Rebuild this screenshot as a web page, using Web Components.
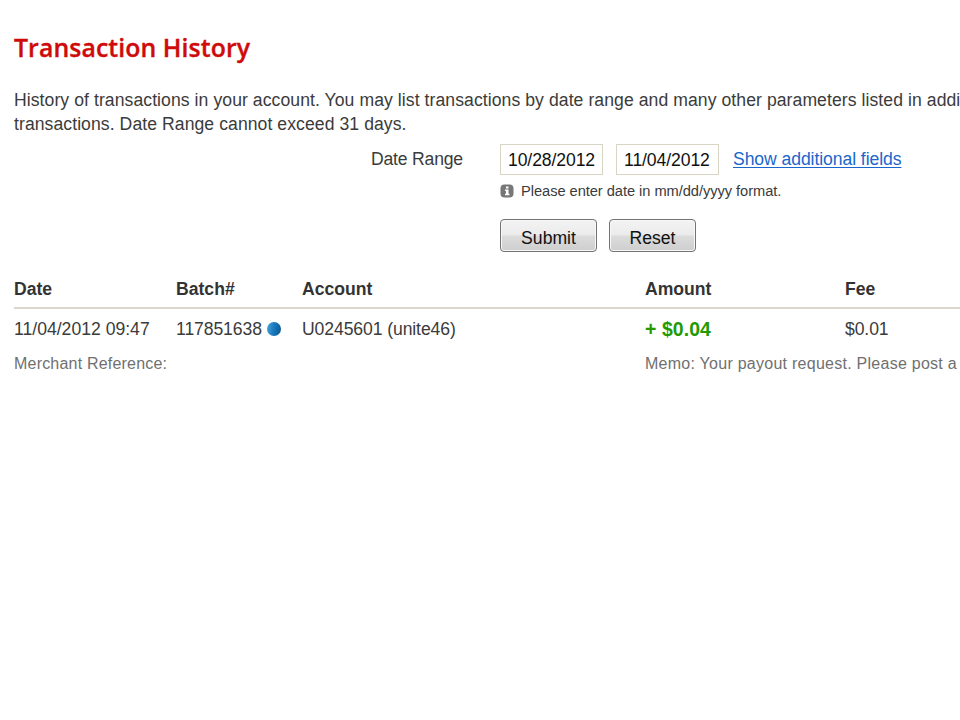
<!DOCTYPE html>
<html lang="en">
<head>
<meta charset="utf-8">
<title>Transaction History</title>
<style>
    body {
        margin: 0;
        width: 960px;
        height: 720px;
        overflow: hidden;
        background: #fff;
        color: #3b3b3b;
        font: 17.6px/24px "Liberation Sans", Arial, sans-serif;
    }
</style>
</head>
<body>
<history-page>
    <page-title slot="title">Transaction History</page-title>
    <page-intro slot="intro">
        <text-line>History of transactions in your account. You may list transactions by date range and many other parameters listed in addi</text-line>
        <text-line>transactions. Date Range cannot exceed 31 days.</text-line>
    </page-intro>
    <date-range-form slot="form" from="10/28/2012" to="11/04/2012"></date-range-form>
    <transaction-table slot="table">
        <transaction-row date="11/04/2012 09:47" batch="117851638" account="U0245601 (unite46)" amount="+ $0.04" fee="$0.01" reference="Merchant Reference:" memo="Memo: Your payout request. Please post a"></transaction-row>
    </transaction-table>
</history-page>

<script>
class BaseElement extends HTMLElement {
    constructor() {
        super();
        const template = document.createElement('template');
        template.innerHTML = this.constructor.markup;
        this.attachShadow({ mode: 'open' });
        this.shadowRoot.appendChild(template.content.cloneNode(true));
    }

    // copy each attribute into the [data-field] element of the same name
    connectedCallback() {
        this.shadowRoot.querySelectorAll('[data-field]').forEach(el => {
            el.textContent = this.getAttribute(el.dataset.field) || '';
        });
    }
}

class HistoryPage extends BaseElement {
    static markup = `
        <style>
            :host { display: flex; flex-direction: column; padding: 32px 0 0 14px; }
        </style>
        <slot name="title"></slot>
        <slot name="intro"></slot>
        <slot name="form"></slot>
        <slot name="table"></slot>
    `;
}

class PageTitle extends BaseElement {
    static markup = `
        <style>
            :host { display: block; height: 56px; }
            h1 {
                margin: 0;
                color: #cf0a0a;
                font: 600 24.8px/30px "Trebuchet MS", "Open Sans", sans-serif;
                letter-spacing: 0.1px;
                -webkit-text-stroke: 0.35px #cf0a0a;
                white-space: nowrap;
            }
        </style>
        <h1><slot></slot></h1>
    `;
}

class PageIntro extends BaseElement {
    static markup = `
        <style>
            :host { display: block; }
        </style>
        <slot></slot>
    `;
}

class TextLine extends BaseElement {
    static markup = `
        <style>
            :host { display: block; letter-spacing: 0.07px; white-space: nowrap; }
        </style>
        <slot></slot>
    `;
}

class DateInput extends BaseElement {
    static markup = `
        <style>
            :host {
                display: flex;
                align-items: center;
                box-sizing: border-box;
                width: 103px;
                height: 31px;
                padding: 1px 0 0 7px;
                border: 1px solid #d9d5c4;
                color: #111;
                letter-spacing: -0.1px;
                white-space: nowrap;
            }
        </style>
        <slot></slot>
    `;
}

class InfoIcon extends BaseElement {
    static markup = `
        <style>
            :host { display: block; width: 14px; height: 14px; margin-top: -3px; }
            svg { display: block; }
        </style>
        <svg width="14" height="14" viewBox="0 0 14 14">
            <rect x="0.5" y="0.5" width="13" height="13" rx="4" fill="#777"/>
            <path d="M6 2.5h2.5v2H6zM5 5.5h3.5v4.3h1v1.5H5V9.8h1V7H5z" fill="#fff"/>
        </svg>
    `;
}

class FormButton extends BaseElement {
    static markup = `
        <style>
            :host { display: block; }
            button {
                display: block;
                width: 100%;
                height: 33px;
                padding: 4px 0 0;
                border: 1.5px solid #737373;
                border-radius: 4px;
                background: linear-gradient(#f3f3f3, #ebebeb 48%, #dcdcdc 52%, #cecece);
                box-shadow: inset 0 0 0 1px #f8f8f8;
                color: #111;
                font: 17.6px/24px "Liberation Sans", Arial, sans-serif;
            }
        </style>
        <button type="button"><slot></slot></button>
    `;
}

class DateRangeForm extends BaseElement {
    static markup = `
        <style>
            :host { display: flex; padding-top: 8px; }
            .label { width: 92px; margin: 3px 0 0 357px; letter-spacing: -0.2px; white-space: nowrap; }
            .fields { display: flex; flex-direction: column; margin-left: 37px; }
            .row { display: flex; }
            a {
                margin: 3px 0 0 14px;
                color: #1a66cc;
                letter-spacing: -0.08px;
                text-decoration: underline 1px;
                text-underline-offset: 2px;
                white-space: nowrap;
            }
            .hint {
                margin-top: 6px;
                height: 20px;
                gap: 7px;
                align-items: center;
                font-size: 14.67px;
                letter-spacing: -0.05px;
                line-height: 20px;
                white-space: nowrap;
            }
            info-icon { margin-top: -1px; }
            .buttons { margin-top: 18px; gap: 12px; }
            .submit { width: 97px; }
            .reset { width: 87px; }
            date-input + date-input { margin-left: 13px; }
        </style>
        <div class="label">Date Range</div>
        <div class="fields">
            <div class="row">
                <date-input><span data-field="from"></span></date-input>
                <date-input><span data-field="to"></span></date-input>
                <a>Show additional fields</a>
            </div>
            <div class="row hint"><info-icon></info-icon><span>Please enter date in mm/dd/yyyy format.</span></div>
            <div class="row buttons">
                <form-button class="submit">Submit</form-button>
                <form-button class="reset">Reset</form-button>
            </div>
        </div>
    `;
}

const columns = '162px 126px 343px 200px 1fr';

class TransactionTable extends BaseElement {
    static markup = `
        <style>
            :host { display: block; margin-top: 25px; }
            .head {
                display: grid;
                grid-template-columns: ${columns};
                height: 30px;
                border-bottom: 2px solid #d9d7cb;
                font-weight: bold;
                color: #333;
            }
        </style>
        <div class="head">
            <span>Date</span><span>Batch#</span><span>Account</span><span>Amount</span><span>Fee</span>
        </div>
        <slot></slot>
    `;
}

class StatusDot extends BaseElement {
    static markup = `
        <style>
            :host {
                display: block;
                width: 14px;
                height: 14px;
                border-radius: 50%;
                background: linear-gradient(100deg, #49a3dc, #1878bd 50%, #0c5488);
            }
        </style>
    `;
}

class TransactionRow extends BaseElement {
    static markup = `
        <style>
            :host { display: block; letter-spacing: -0.1px; white-space: nowrap; }
            .main, .details { display: grid; grid-template-columns: ${columns}; }
            .main { padding-top: 8px; }
            .date { letter-spacing: 0; }
            .batch { display: flex; align-items: center; gap: 5px; }
            .amount { color: #229a00; font-weight: bold; font-size: 19.4px; letter-spacing: 0.1px; }
            .details { padding-top: 11px; color: #707070; font-size: 16px; letter-spacing: 0.2px; }
            .reference { grid-column: 1 / 4; }
            .memo { letter-spacing: 0.26px; }
        </style>
        <div class="main">
            <span class="date" data-field="date"></span>
            <span class="batch"><span data-field="batch"></span><status-dot></status-dot></span>
            <span data-field="account"></span>
            <span class="amount" data-field="amount"></span>
            <span data-field="fee"></span>
        </div>
        <div class="details">
            <span class="reference" data-field="reference"></span>
            <span class="memo" data-field="memo"></span>
        </div>
    `;
}

customElements.define('history-page', HistoryPage);
customElements.define('page-title', PageTitle);
customElements.define('page-intro', PageIntro);
customElements.define('text-line', TextLine);
customElements.define('date-input', DateInput);
customElements.define('info-icon', InfoIcon);
customElements.define('form-button', FormButton);
customElements.define('date-range-form', DateRangeForm);
customElements.define('transaction-table', TransactionTable);
customElements.define('status-dot', StatusDot);
customElements.define('transaction-row', TransactionRow);
</script>
</body>
</html>
